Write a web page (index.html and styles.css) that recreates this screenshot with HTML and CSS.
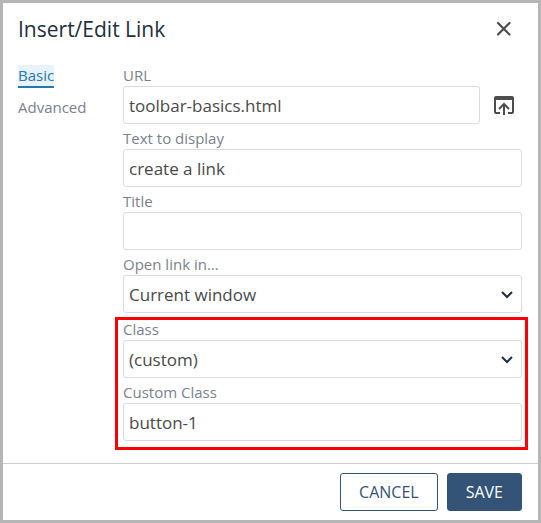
FILE: index.html
```html
<!DOCTYPE html>
<html lang="en">
<head>
    <meta charset="UTF-8">
    <meta name="viewport" content="width=device-width, initial-scale=1.0">
    <title>Insert/Edit Link</title>
    <link rel="stylesheet" href="styles.css">
</head>
<body>

    <form class="dialog">
        <header class="dialog-header">
            <h1>Insert/Edit Link</h1>
            <button type="button" class="icon-button" aria-label="Close">
                <svg width="24" height="24" viewBox="0 0 24 24" fill="none" stroke="#4d4d4d" stroke-width="2.2" stroke-linecap="round">
                    <path d="M6 6l11.500 11.500M17.500 6L6 17.500"/>
                </svg>
            </button>
        </header>

        <div class="dialog-body">
            <nav class="tabs">
                <a href="#basic" class="active">Basic</a>
                <a href="#advanced">Advanced</a>
            </nav>

            <div class="fields">
                <div class="field">
                    <label for="url">URL</label>
                    <div class="url-row">
                        <input type="text" id="url" value="toolbar-basics.html">
                        <button type="button" class="icon-button" aria-label="Browse">
                            <svg width="26" height="26" viewBox="0 0 26 26">
                                <path fill="#4d4d4d" d="M5 4h16a2 2 0 0 1 2 2v14a2 2 0 0 1-2 2h-4v-2h4V8H5v12h4v2H5a2 2 0 0 1-2-2V6a2 2 0 0 1 2-2z"/>
                                <path fill="none" stroke="#4d4d4d" stroke-width="2" d="M13 23V12M8 17l5-5 5 5"/>
                            </svg>
                        </button>
                    </div>
                </div>
                <div class="field">
                    <label for="text">Text to display</label>
                    <input type="text" id="text" value="create a link">
                </div>
                <div class="field">
                    <label for="title">Title</label>
                    <input type="text" id="title">
                </div>
                <div class="field">
                    <label for="target">Open link in...</label>
                    <div class="select">
                        <select id="target">
                            <option>Current window</option>
                            <option>New window</option>
                        </select>
                        <svg width="12" height="8" viewBox="0 0 12 8"><path d="M1 1l5 5 5-5"/></svg>
                    </div>
                </div>

                <div class="highlight">
                    <div class="field">
                        <label for="class">Class</label>
                        <div class="select">
                            <select id="class">
                                <option>(custom)</option>
                            </select>
                            <svg width="12" height="8" viewBox="0 0 12 8"><path d="M1 1l5 5 5-5"/></svg>
                        </div>
                    </div>
                    <div class="field">
                        <label for="custom">Custom Class</label>
                        <input type="text" id="custom" value="button-1">
                    </div>
                </div>
            </div>
        </div>

        <footer class="dialog-footer">
            <button type="button" class="button">CANCEL</button>
            <button type="submit" class="button primary">SAVE</button>
        </footer>
    </form>

</body>
</html>
```
FILE: styles.css
```css
* {
    box-sizing: border-box;
}
body {
    margin: 0;
    font-family: "Open Sans", "Noto Sans", sans-serif;
    background: #fff;
}
.dialog {
    border: 3px solid #b6b6b6;
    background: #fff;
}
.dialog-header {
    display: flex;
    justify-content: space-between;
    align-items: center;
    padding: 8px 22px 8px 15px;
}
h1 {
    margin: 0;
    font-size: 21px;
    line-height: 36px;
    font-weight: 400;
    color: #222f3e;
}
.icon-button {
    padding: 0;
    border: none;
    background: none;
    cursor: pointer;
}
.icon-button svg {
    display: block;
}
.dialog-body {
    display: flex;
    padding: 11px 16px 13px 15px;
}
.tabs {
    display: flex;
    flex-direction: column;
    align-items: flex-start;
    gap: 9px;
    width: 105px;
    margin-top: -1px;
}
.tabs a {
    font-size: 15px;
    line-height: 21px;
    color: #7b828c;
    text-decoration: none;
    border-bottom: 2px solid transparent;
}
.tabs a.active {
    color: #207ab7;
    background: #e9f2f8;
    border-color: #207ab7;
}
.fields {
    flex: 1;
    display: flex;
    flex-direction: column;
    gap: 5px;
}
.field {
    display: flex;
    flex-direction: column;
    gap: 2px;
}
label {
    font-size: 15px;
    line-height: 18px;
    color: #7b828c;
}
input, select {
    width: 100%;
    height: 38px;
    padding: 0 5px;
    border: 1px solid #dcdcdf;
    border-radius: 3px;
    background: #fff;
    font-family: inherit;
    font-size: 17px;
    color: #4a4a4a;
}
.url-row {
    display: flex;
    align-items: center;
    gap: 11px;
    padding-right: 5px;
}
.select {
    position: relative;
}
.select select {
    display: block;
    appearance: none;
}
.select svg {
    position: absolute;
    right: 9px;
    top: 16px;
    fill: none;
    stroke: #222f3e;
    stroke-width: 2;
    pointer-events: none;
}
.highlight {
    display: flex;
    flex-direction: column;
    gap: 5px;
    margin: -1px -6px 0 -8px;
    padding: 0 3px 6px 5px;
    border: 3px solid #f00;
}
.dialog-footer {
    display: flex;
    justify-content: flex-end;
    gap: 9px;
    padding: 9px 16px;
    border-top: 1px solid #ccc;
}
.button {
    height: 38px;
    padding: 0 18px;
    border: 1px solid #335377;
    border-radius: 3px;
    background: #fff;
    color: #335377;
    font-family: inherit;
    font-size: 16px;
    cursor: pointer;
}
.primary {
    background: #335377;
    color: #fff;
}
```
